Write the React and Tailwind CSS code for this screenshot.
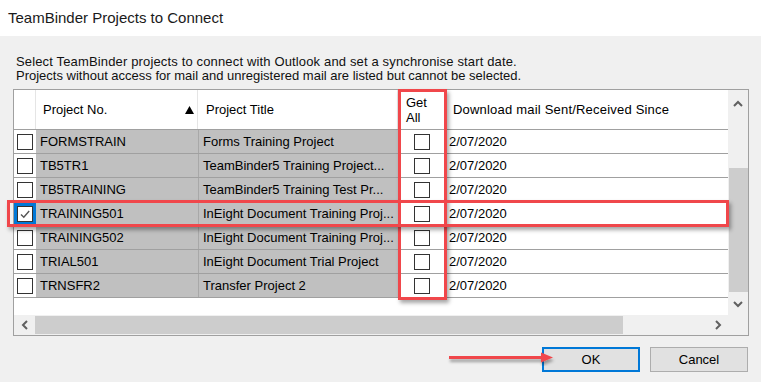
import React from "react";

const rows = [
  { no: "FORMSTRAIN", title: "Forms Training Project" },
  { no: "TB5TR1", title: "TeamBinder5 Training Project..." },
  { no: "TB5TRAINING", title: "TeamBinder5 Training Test Pr..." },
  { no: "TRAINING501", title: "InEight Document Training Proj...", checked: true },
  { no: "TRAINING502", title: "InEight Document Training Proj..." },
  { no: "TRIAL501", title: "InEight Document Trial Project" },
  { no: "TRNSFR2", title: "Transfer Project 2" },
];

const Box = ({ checked }) => (
  <div className="w-4 h-4 bg-white border border-[#333333] flex items-center justify-center">
    {checked && (
      <svg width="12" height="12" viewBox="0 0 12 12">
        <path d="M2 6.5 L4.8 9.2 L10.2 3" fill="none" stroke="#555555" strokeWidth="1.4" />
      </svg>
    )}
  </div>
);

const Chevron = ({ dir }) => {
  const d = {
    up: "M1 6 L5 2 L9 6",
    down: "M1 2 L5 6 L9 2",
    left: "M6 1 L2 5 L6 9",
    right: "M2 1 L6 5 L2 9",
  }[dir];
  const vertical = dir === "up" || dir === "down";
  return (
    <svg width={vertical ? 10 : 8} height={vertical ? 8 : 10} viewBox={vertical ? "0 0 10 8" : "0 0 8 10"}>
      <path d={d} fill="none" stroke="#606060" strokeWidth="2" />
    </svg>
  );
};

function Row({ row }) {
  return (
    <div className="flex h-6 border-b border-[#a0a0a0] text-[13px] text-black">
      <div
        className={
          "w-[22px] flex items-center justify-center " +
          (row.checked ? "bg-[#0078d7]" : "bg-white")
        }
      >
        <Box checked={row.checked} />
      </div>
      <div className="w-[162px] bg-[#c0c0c0] flex items-center pl-1 whitespace-nowrap overflow-hidden">
        {row.no}
      </div>
      <div className="w-[200px] bg-[#c0c0c0] border-l border-[#a8a8a8] flex items-center pl-1 whitespace-nowrap overflow-hidden">
        {row.title}
      </div>
      <div className="w-[47px] bg-white flex items-center justify-center">
        <Box />
      </div>
      <div className="w-[283px] bg-white flex items-center pl-1">2/07/2020</div>
    </div>
  );
}

export default function App() {
  return (
    <div
      className="relative w-[761px] h-[382px] bg-[#f0f0f0] overflow-hidden text-black"
      style={{ fontFamily: '"Liberation Sans", Arial, sans-serif' }}
    >
      <div className="h-9 bg-white flex items-center pl-2 text-[15px] text-[#1a1a1a]">
        TeamBinder Projects to Connect
      </div>

      <div className="pl-4 pt-[19px] text-[13px] leading-[14px] text-[#111] whitespace-nowrap">
        <div className="tracking-[0.15px]">
          Select TeamBinder projects to connect with Outlook and set a synchronise start date.
        </div>
        <div>Projects without access for mail and unregistered mail are listed but cannot be selected.</div>
      </div>

      <div className="ml-[13px] mt-[6px] w-[736px] border border-[#a0a0a0] bg-white flex flex-col">
        <div className="flex h-[225px]">
          <div className="w-[714px] flex flex-col">
            <div className="flex h-10 border-b border-[#a0a0a0] bg-white text-[13px]">
              <div className="w-[22px] border-r border-[#e5e5e5]" />
              <div className="w-[162px] border-r border-[#e5e5e5] flex items-center justify-between pl-[7px] pr-[3px]">
                <span>Project No.</span>
                <svg width="9" height="8" viewBox="0 0 9 8">
                  <path d="M4.5 0 L9 8 L0 8 Z" fill="#000" />
                </svg>
              </div>
              <div className="w-[200px] border-r border-[#e5e5e5] flex items-center pl-2">Project Title</div>
              <div className="w-[47px] border-r border-[#e5e5e5] flex flex-col justify-center pl-2 leading-[15px]">
                <span>Get</span>
                <span>All</span>
              </div>
              <div className="w-[283px] flex items-center pl-2 tracking-[0.2px]">
                Download mail Sent/Received Since
              </div>
            </div>
            {rows.map((r) => (
              <Row key={r.no} row={r} />
            ))}
            <div className="flex-1 bg-white" />
          </div>
          <div className="w-5 bg-[#f0f0f0] flex flex-col items-center">
            <div className="h-6 flex items-center justify-center pt-1">
              <Chevron dir="up" />
            </div>
            <div className="h-[54px]" />
            <div className="w-[19px] h-[124px] bg-[#cdcdcd]" />
            <div className="flex-1 flex items-center justify-center">
              <Chevron dir="down" />
            </div>
          </div>
        </div>
        <div className="flex h-5 bg-[#f0f0f0]">
          <div className="w-[21px] flex items-center justify-center">
            <Chevron dir="left" />
          </div>
          <div className="w-[588px] bg-[#cdcdcd] my-[1px]" />
          <div className="flex-1" />
          <div className="w-[21px] flex items-center justify-center">
            <Chevron dir="right" />
          </div>
          <div className="w-5" />
        </div>
      </div>

      <div className="flex justify-end gap-[10px] pr-[13px] mt-[11px] text-[13px]">
        <button className="w-[98px] h-[25px] bg-[#e1e1e1] border-2 border-[#0078d7] flex items-center justify-center">
          OK
        </button>
        <button className="w-[98px] h-[25px] bg-[#e1e1e1] border border-[#adadad] flex items-center justify-center">
          Cancel
        </button>
      </div>

      {/* annotation overlays */}
      <div className="absolute left-[398px] top-[89px] w-[49px] h-[211px] border-[3px] border-[#f0474b] shadow-[2px_3px_4px_rgba(0,0,0,0.35)]" />
      <div className="absolute left-[7px] top-[200px] w-[722px] h-[27px] border-[3px] border-[#f0474b] shadow-[2px_3px_4px_rgba(0,0,0,0.35)]" />
      <svg className="absolute left-[446px] top-[350px]" width="112" height="16" viewBox="0 0 112 16">
        <defs>
          <filter id="sh" x="-10%" y="-50%" width="120%" height="200%">
            <feDropShadow dx="1" dy="3" stdDeviation="1.5" floodColor="#000" floodOpacity="0.35" />
          </filter>
        </defs>
        <g filter="url(#sh)">
          <rect x="3" y="6" width="96" height="3" fill="#f0474b" />
          <path d="M95 2.5 L107 7.5 L95 12.5 Z" fill="#f0474b" />
        </g>
      </svg>
    </div>
  );
}
